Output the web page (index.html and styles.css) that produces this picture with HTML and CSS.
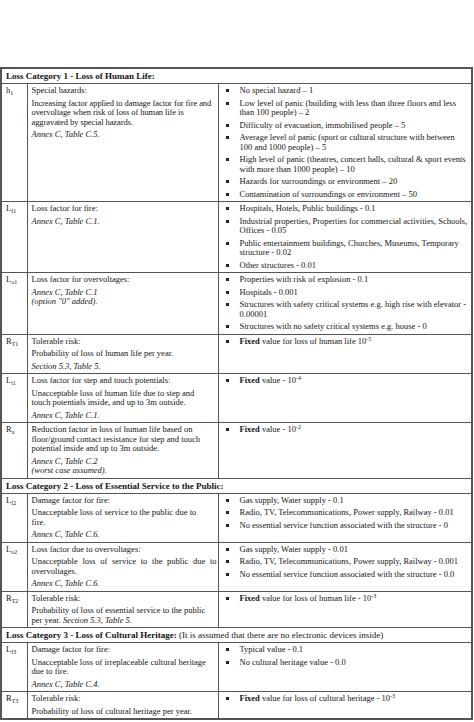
FILE: index.html
```html
<!DOCTYPE html>
<html>
<head>
<meta charset="utf-8">
<link rel="stylesheet" href="styles.css">
</head>
<body>
<table class="risk">
  <colgroup><col class="c1"><col class="c2"><col class="c3"></colgroup>
  <tr class="cat"><td colspan="3">Loss Category 1 - Loss of Human Life:</td></tr>
  <tr>
    <td class="sym">h<sub>1</sub></td>
    <td class="desc">
      <p>Special hazards:</p>
      <p class="tight">Increasing factor applied to damage factor for fire and<br>overvoltage when risk of loss of human life is<br>aggravated by special hazards.</p>
      <p><i>Annex C, Table C.5.</i></p>
    </td>
    <td class="vals"><ul>
      <li>No special hazard – 1</li>
      <li>Low level of panic (building with less than three floors and less<br>than 100 people) – 2</li>
      <li>Difficulty of evacuation, immobilised people – 5</li>
      <li>Average level of panic (sport or cultural structure with between<br>100 and 1000 people) – 5</li>
      <li>High level of panic (theatres, concert halls, cultural &amp; sport events<br>with more than 1000 people) – 10</li>
      <li>Hazards for surroundings or environment – 20</li>
      <li>Contamination of surroundings or environment – 50</li>
    </ul></td>
  </tr>
  <tr>
    <td class="sym">L<sub>f1</sub></td>
    <td class="desc">
      <p>Loss factor for fire:</p>
      <p><i>Annex C, Table C.1.</i></p>
    </td>
    <td class="vals"><ul>
      <li>Hospitals, Hotels, Public buildings - 0.1</li>
      <li>Industrial properties, Properties for commercial activities, Schools,<br>Offices - 0.05</li>
      <li>Public entertainment buildings, Churches, Museums, Temporary<br>structure - 0.02</li>
      <li>Other structures - 0.01</li>
    </ul></td>
  </tr>
  <tr>
    <td class="sym">L<sub>o1</sub></td>
    <td class="desc">
      <p>Loss factor for overvoltages:</p>
      <p><i>Annex C, Table C.1<br>(option "0" added).</i></p>
    </td>
    <td class="vals"><ul>
      <li>Properties with risk of explosion - 0.1</li>
      <li>Hospitals - 0.001</li>
      <li>Structures with safety critical systems e.g. high rise with elevator -<br>0.00001</li>
      <li>Structures with no safety critical systems e.g. house - 0</li>
    </ul></td>
  </tr>
  <tr>
    <td class="sym">R<sub>T1</sub></td>
    <td class="desc">
      <p>Tolerable risk:</p>
      <p>Probability of loss of human life per year.</p>
      <p><i>Section 5.3, Table 5.</i></p>
    </td>
    <td class="vals"><ul>
      <li><b>Fixed</b> value for loss of human life 10<sup>-5</sup></li>
    </ul></td>
  </tr>
  <tr>
    <td class="sym">L<sub>t1</sub></td>
    <td class="desc">
      <p>Loss factor for step and touch potentials:</p>
      <p class="nw">Unacceptable loss of human life due to step and<br>touch potentials inside, and up to 3m outside.</p>
      <p><i>Annex C, Table C.1.</i></p>
    </td>
    <td class="vals"><ul>
      <li><b>Fixed</b> value - 10<sup>-4</sup></li>
    </ul></td>
  </tr>
  <tr>
    <td class="sym">R<sub>a</sub></td>
    <td class="desc">
      <p class="nw">Reduction factor in loss of human life based on<br>floor/ground contact resistance for step and touch<br>potential inside and up to 3m outside.</p>
      <p><i>Annex C, Table C.2<br>(worst case assumed).</i></p>
    </td>
    <td class="vals"><ul>
      <li><b>Fixed</b> value - 10<sup>-2</sup></li>
    </ul></td>
  </tr>
  <tr class="cat"><td colspan="3">Loss Category 2 - Loss of Essential Service to the Public:</td></tr>
  <tr>
    <td class="sym">L<sub>f2</sub></td>
    <td class="desc">
      <p>Damage factor for fire:</p>
      <p class="nw">Unacceptable loss of service to the public due to<br>fire.</p>
      <p><i>Annex C, Table C.6.</i></p>
    </td>
    <td class="vals"><ul>
      <li>Gas supply, Water supply - 0.1</li>
      <li>Radio, TV, Telecommunications, Power supply, Railway - 0.01</li>
      <li>No essential service function associated with the structure - 0</li>
    </ul></td>
  </tr>
  <tr>
    <td class="sym">L<sub>o2</sub></td>
    <td class="desc">
      <p>Loss factor due to overvoltages:</p>
      <p><span class="jl">Unacceptable loss of service to the public due to</span>overvoltages.</p>
      <p><i>Annex C, Table C.6.</i></p>
    </td>
    <td class="vals"><ul>
      <li>Gas supply, Water supply - 0.01</li>
      <li>Radio, TV, Telecommunications, Power supply, Railway - 0.001</li>
      <li>No essential service function associated with the structure - 0.0</li>
    </ul></td>
  </tr>
  <tr>
    <td class="sym">R<sub>T2</sub></td>
    <td class="desc">
      <p>Tolerable risk:</p>
      <p class="nw">Probability of loss of essential service to the public<br>per year. <i>Section 5.3, Table 5.</i></p>
    </td>
    <td class="vals"><ul>
      <li><b>Fixed</b> value for loss of human life - 10<sup>-3</sup></li>
    </ul></td>
  </tr>
  <tr class="cat"><td colspan="3">Loss Category 3 - Loss of Cultural Heritage: <span class="note">(It is assumed that there are no electronic devices inside)</span></td></tr>
  <tr>
    <td class="sym">L<sub>f3</sub></td>
    <td class="desc">
      <p>Damage factor for fire:</p>
      <p class="nw">Unacceptable loss of irreplaceable cultural heritage<br>due to fire.</p>
      <p><i>Annex C, Table C.4.</i></p>
    </td>
    <td class="vals"><ul>
      <li>Typical value - 0.1</li>
      <li>No cultural heritage value - 0.0</li>
    </ul></td>
  </tr>
  <tr>
    <td class="sym">R<sub>T3</sub></td>
    <td class="desc">
      <p>Tolerable risk:</p>
      <p>Probability of loss of cultural heritage per year.</p>
    </td>
    <td class="vals"><ul>
      <li><b>Fixed</b> value for loss of cultural heritage - 10<sup>-3</sup></li>
    </ul></td>
  </tr>
</table>
</body>
</html>
```

FILE: styles.css
```css
html, body {
  margin: 0;
  padding: 0;
  background: #fff;
}
body {
  padding-top: 67px;
  font-family: "Liberation Serif", "Times New Roman", serif;
  font-size: 8.5px;
  line-height: 9.5px;
  color: #151515;
}
.risk {
  border-collapse: collapse;
  width: 471px;
  table-layout: fixed;
  border: 2px solid #555;
}
.c1 { width: 26px; }
.c2 { width: 191px; }
.c3 { width: 254px; }
.risk td {
  border: 1.5px solid #555;
  vertical-align: top;
  padding: 2px 0 2px 4px;
}
.risk tr.cat td {
  font-weight: bold;
  font-size: 9px;
  padding: 3px 4px 1.5px 4px;
}
.note { font-weight: normal; }
.sym { padding-left: 3px; }
sub, sup {
  font-size: 6px;
  line-height: 0;
}
sub { vertical-align: -1.5px; }
sup { vertical-align: 3px; }
.desc p {
  margin: 0 0 3px 0;
}
.desc p:last-child { margin-bottom: 0; }
.nw { white-space: nowrap; }
.tight { white-space: nowrap; letter-spacing: -0.08px; }
.jl {
  display: block;
  text-align: justify;
  text-align-last: justify;
  padding-right: 1px;
}
.vals ul {
  margin: 0;
  padding: 0;
  list-style: none;
}
.vals li {
  position: relative;
  padding-left: 17px;
  margin-bottom: 3px;
  white-space: nowrap;
}
.vals li:last-child { margin-bottom: 0; }
.vals li::before {
  content: "";
  position: absolute;
  left: 3px;
  top: 3px;
  width: 3px;
  height: 3px;
  background: #222;
}
```
